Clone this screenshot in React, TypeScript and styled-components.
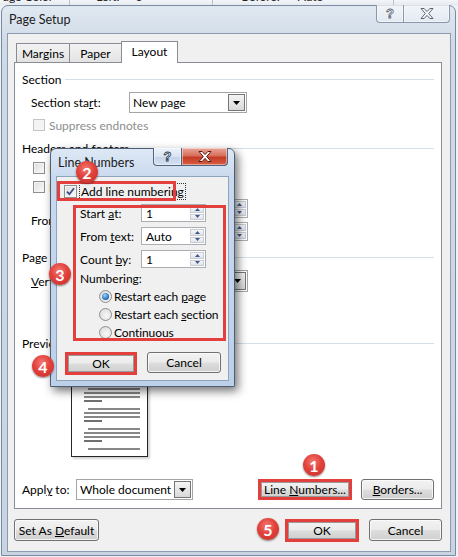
import React from 'react';
import styled, {createGlobalStyle, css} from 'styled-components';

const GlobalStyle = createGlobalStyle`
    html, body {
        margin: 0;
        padding: 0;
    }
    body {
        background: #eef2f6;
        font-family: Lato, "Noto Sans", sans-serif;
        font-size: 12px;
        color: #000;
    }
    * {
        box-sizing: border-box;
    }
`

const RED = '#e3403d';

/* ---------- small drawn bits ---------- */

const DownTriangle = ({color = '#000'}: {color?: string}) => (
    <svg width="7" height="4" viewBox="0 0 7 4"><path d="M0 0H7L3.5 4Z" fill={color}/></svg>
);

const UpTriangle = ({color = '#3f5a8a'}: {color?: string}) => (
    <svg width="5" height="3" viewBox="0 0 5 3"><path d="M0 3H5L2.5 0Z" fill={color}/></svg>
);

const SmallDown = ({color = '#3f5a8a'}: {color?: string}) => (
    <svg width="5" height="3" viewBox="0 0 5 3"><path d="M0 0H5L2.5 3Z" fill={color}/></svg>
);

const CloseGlyph = ({stroke, fill}: { stroke: string, fill: string }) => (
    <svg width="14" height="11" viewBox="0 0 14 11">
        <path d="M1 0.5H4.2L7 3.6L9.8 0.5H13L8.7 5.5L13 10.5H9.8L7 7.4L4.2 10.5H1L5.3 5.5Z"
              fill={fill} stroke={stroke} strokeWidth="1" strokeLinejoin="round"/>
    </svg>
);

const CheckMark = () => (
    <svg width="9" height="9" viewBox="0 0 9 9">
        <path d="M1 4.6L3.4 7.2L8 1.2" fill="none" stroke="#394e8c" strokeWidth="1.8"/>
    </svg>
);

/* ---------- ribbon behind the dialog ---------- */

const Ribbon = styled.div`
    height: 5px;
    overflow: hidden;
    display: flex;
    align-items: flex-start;
    background: linear-gradient(#f3f6f9, #e6ebf1);
    font-size: 12px;
    line-height: 14px;
    color: #222;
`

const RibbonItem = styled.span<{ $gap: number }>`
    margin-left: ${props => props.$gap}px;
    margin-top: -10px;
    white-space: nowrap;
`

const RibbonSep = styled.span<{ $gap: number }>`
    margin-left: ${props => props.$gap}px;
    width: 1px;
    height: 5px;
    background: #b7c1cc;
`

/* ---------- page setup window ---------- */

const Stage = styled.div`
    position: relative;
    width: 458px;
    height: 557px;
    overflow: hidden;
`

const Window = styled.div`
    margin-left: 1px;
    width: 455px;
    height: 551px;
    display: flex;
    flex-direction: column;
    padding: 0 4px 3px 5px;
    border: 1px solid #7a8aa0;
    border-radius: 7px 7px 0 0;
    background: linear-gradient(180deg, #e0e8f1 0px, #cfdae7 40px, #c8d4e2 100%);
`

const TitleBar = styled.div`
    height: 27px;
    display: flex;
    justify-content: space-between;
    align-items: flex-start;
`

const Title = styled.span`
    margin: 6px 0 0 2px;
    font-size: 12.5px;
    line-height: 16px;
    color: #1b1b1b;
`

const CaptionGroup = styled.div<{ $help: number, $close: number }>`
    display: flex;
    margin-top: -1px;
    margin-right: 1px;
    height: 18px;

    & > :first-child {
        width: ${props => props.$help}px;
    }

    & > :last-child {
        width: ${props => props.$close}px;
    }
`

const CaptionButton = styled.span<{ $active?: boolean, $danger?: boolean, $side: 'left' | 'right' }>`
    display: flex;
    align-items: center;
    justify-content: center;
    height: 100%;
    border: 1px solid ${props => props.$active ? '#4f6280' : '#8b98aa'};
    border-top: none;
    ${props => props.$side === 'left' ? css`border-radius: 0 0 0 4px;` : css`border-radius: 0 0 4px 0;
        border-left: none;`}
    background: ${props => props.$danger
            ? 'linear-gradient(180deg, #e9a596 0%, #d7705c 45%, #c43b26 55%, #d65e42 100%)'
            : props.$active
                    ? 'linear-gradient(180deg, #eef3fa 0%, #d9e4f2 50%, #c3d3e8 51%, #d4e1f1 100%)'
                    : 'linear-gradient(180deg, rgba(255,255,255,.55) 0%, rgba(255,255,255,.25) 100%)'};
    box-shadow: inset 0 0 0 1px rgba(255, 255, 255, .45);
`

const HelpGlyph = styled.span<{ $stroke: string }>`
    font-family: "Liberation Sans", sans-serif;
    font-weight: 700;
    font-size: 13px;
    line-height: 13px;
    color: #fff;
    -webkit-text-stroke: 0.8px ${props => props.$stroke};
`

const Client = styled.div`
    flex: 1;
    display: flex;
    flex-direction: column;
    padding: 7px 8px 0 6px;
    border: 1px solid #8c9bb0;
    background: #f0f0f0;
`

const TabStrip = styled.div`
    height: 21px;
    display: flex;
    align-items: flex-end;
    padding-left: 2px;
`

const Tab = styled.span<{ $w: number, $active?: boolean }>`
    width: ${props => props.$w}px;
    height: 19px;
    display: flex;
    align-items: center;
    justify-content: center;
    border: 1px solid #898c95;
    border-bottom: none;
    margin-right: -1px;
    background: linear-gradient(#f3f3f3, #e3e3e3);
    ${props => props.$active && css`
        height: 22px;
        margin-bottom: -1px;
        padding-bottom: 2px;
        background: #fff;
        position: relative;
        z-index: 1;
    `}
`

const Panel = styled.div`
    width: 428px;
    height: 447px;
    display: flex;
    flex-direction: column;
    padding: 0 7px;
    border: 1px solid #898c95;
    background: #fff;
`

const GroupHeading = styled.div<{ $mt: number }>`
    height: 16px;
    margin-top: ${props => props.$mt}px;
    display: flex;
    align-items: center;
    gap: 4px;

    &::after {
        content: '';
        flex: 1;
        height: 1px;
        background: #d5dfe5;
    }
`

const FieldRow = styled.div<{ $mt: number, $h: number, $pl?: number }>`
    height: ${props => props.$h}px;
    margin-top: ${props => props.$mt}px;
    padding-left: ${props => props.$pl ?? 9}px;
    display: flex;
    align-items: center;
`

const FieldLabel = styled.span<{ $w: number, $disabled?: boolean }>`
    width: ${props => props.$w}px;
    flex-shrink: 0;
    white-space: nowrap;
    color: ${props => props.$disabled ? '#8d8d8d' : 'inherit'};
`

const CheckLabel = styled.span<{ $disabled?: boolean }>`
    margin-left: 4px;
    white-space: nowrap;
    color: ${props => props.$disabled ? '#8d8d8d' : 'inherit'};
`

const CheckBox = styled.span<{ $size?: number, $disabled?: boolean }>`
    width: ${props => props.$size ?? 13}px;
    height: ${props => props.$size ?? 13}px;
    flex-shrink: 0;
    display: flex;
    align-items: center;
    justify-content: center;
    border: 1px solid ${props => props.$disabled ? '#c4c4c4' : '#8e8f8f'};
    background: ${props => props.$disabled ? '#f4f4f4' : 'linear-gradient(135deg, #dcdcdc, #fbfbfb)'};
    box-shadow: inset 0 0 0 1px #f4f4f4;
`

const Select = styled.div<{ $w: number }>`
    width: ${props => props.$w}px;
    height: 100%;
    display: flex;
    border: 1px solid #a5a5a5;
    background: #fff;
`

const SelectValue = styled.span`
    flex: 1;
    display: flex;
    align-items: center;
    padding-left: 3px;
    white-space: nowrap;
    overflow: hidden;
`

const SelectArrow = styled.span`
    width: 17px;
    margin: 1px;
    display: flex;
    align-items: center;
    justify-content: center;
    border: 1px solid #767676;
    background: linear-gradient(#f4f4f4, #d9d9d9);
`

const SpinField = styled.div<{ $w: number }>`
    width: ${props => props.$w}px;
    height: 100%;
    display: flex;
    border: 1px solid #abadb3;
    background: #fff;
`

const SpinValue = styled.span`
    flex: 1;
    display: flex;
    align-items: center;
    padding-left: 4px;
`

const SpinButtons = styled.span`
    width: 15px;
    display: flex;
    flex-direction: column;
    padding: 1px 1px 1px 0;
    gap: 1px;
`

const SpinButton = styled.span`
    flex: 1;
    display: flex;
    align-items: center;
    justify-content: center;
    border: 1px solid #c9ccd2;
    background: linear-gradient(#f6f7f9, #dfe3ea);
`

const EdgeBlock = styled.div<{ $mt: number }>`
    margin-top: ${props => props.$mt}px;
    padding-left: 9px;
    display: grid;
    grid-template-columns: 98px 51px 68px;
    grid-template-rows: 19px 19px;
    row-gap: 4px;
    align-items: center;
`

const EdgeLabel = styled.span`
    grid-row: 1 / span 2;
`

const PreviewPage = styled.div`
    margin: 6px 0 0 49px;
    width: 77px;
    height: 100px;
    border: 1px solid #262626;
    background: #fff;
    box-shadow: 2px 2px 2px rgba(0, 0, 0, .18);
`

const ButtonGroup = styled.div<{ $gap: number }>`
    margin-left: auto;
    display: flex;
    align-items: flex-start;
    gap: ${props => props.$gap}px;
`

const Button = styled.button<{ $w: number, $h?: number, $marked?: boolean }>`
    width: ${props => props.$w}px;
    height: ${props => props.$h ?? 22}px;
    padding: 0;
    font-family: inherit;
    font-size: 12px;
    color: #000;
    border: 1px solid #707070;
    border-radius: 3px;
    background: linear-gradient(#f2f2f2 0%, #ebebeb 48%, #dddddd 52%, #cfcfcf 100%);
    box-shadow: inset 0 0 0 1px rgba(252, 252, 252, .8);
    ${props => props.$marked && css`
        border: 3px solid ${RED};
        border-radius: 0;
        box-shadow: inset 0 0 0 1px #9a9a9a;
    `}
`

const BottomRow = styled.div`
    margin-top: 10px;
    display: flex;
    align-items: flex-start;
`

/* ---------- line numbers dialog ---------- */

const LineDialog = styled.div`
    position: absolute;
    left: 50px;
    top: 148px;
    width: 185px;
    height: 239px;
    display: flex;
    flex-direction: column;
    padding: 0 5px 5px 5px;
    border: 1px solid #4d5e75;
    border-radius: 6px 6px 0 0;
    background: linear-gradient(180deg, #dde8f5 0px, #c9d9ee 30px, #bcd0e8 100%);
    box-shadow: 3px 4px 10px rgba(0, 0, 0, .55);
    z-index: 2;
`

const DialogTitleBar = styled.div`
    height: 27px;
    display: flex;
    justify-content: space-between;
    align-items: flex-start;
`

const DialogClient = styled.div`
    flex: 1;
    display: flex;
    flex-direction: column;
    border: 1px solid #8ea3be;
    background: #f0f0f0;
`

const Marked = styled.div<{ $inset: string }>`
    position: relative;

    &::after {
        content: '';
        position: absolute;
        inset: ${props => props.$inset};
        border: 3px solid ${RED};
        pointer-events: none;
    }
`

const AddRow = styled(Marked)`
    width: 119px;
    height: 20px;
    margin-top: 4px;
    padding-left: 7px;
    display: flex;
    align-items: center;
`

const FocusLabel = styled.span`
    margin-left: 2px;
    padding: 0 1px;
    line-height: 15px;
    border: 1px dotted #333;
    white-space: nowrap;
`

const NumberGroup = styled(Marked)`
    width: 153px;
    margin: 3px 0 0 16px;
    display: flex;
    flex-direction: column;
`

const SpinRow = styled.div<{ $mt?: number }>`
    height: 18px;
    margin-top: ${props => props.$mt ?? 0}px;
    padding-left: 7px;
    display: flex;
    align-items: center;
`

const SubLabel = styled.span`
    height: 16px;
    margin-top: 3px;
    padding-left: 7px;
    line-height: 16px;
`

const RadioRow = styled.label`
    height: 18px;
    padding-left: 26px;
    display: flex;
    align-items: center;
    gap: 2px;
    white-space: nowrap;
    letter-spacing: -0.1px;
`

const Radio = styled.span<{ $on?: boolean }>`
    width: 13px;
    height: 13px;
    flex-shrink: 0;
    border-radius: 50%;
    display: flex;
    align-items: center;
    justify-content: center;
    border: 1px solid #8e8f8f;
    background: radial-gradient(circle at 60% 60%, #f8f8f8, #d6d6d6);

    &::after {
        content: '';
        display: ${props => props.$on ? 'block' : 'none'};
        width: 7px;
        height: 7px;
        border-radius: 50%;
        background: radial-gradient(circle at 40% 35%, #9fd6f7 0%, #2a73c2 60%, #1a4f96 100%);
    }
`

const DialogButtons = styled.div`
    margin-top: 11px;
    padding-left: 8px;
    display: flex;
    align-items: flex-start;
    gap: 10px;
`

/* ---------- step badges ---------- */

const Badge = styled.span<{ $x: number, $y: number }>`
    position: absolute;
    left: ${props => props.$x}px;
    top: ${props => props.$y}px;
    width: 22px;
    height: 22px;
    border-radius: 50%;
    display: flex;
    align-items: center;
    justify-content: center;
    background: radial-gradient(circle at 45% 35%, #f37a72 0%, #e2413b 45%, #c22f2a 100%);
    color: #fff;
    font-size: 16px;
    font-weight: 700;
    box-shadow: 0 1px 2px rgba(0, 0, 0, .45);
    z-index: 3;
`

const PageLines = () => {
    const lines: React.ReactNode[] = [];
    for (let p = 0; p < 5; p++) {
        for (let k = 0; k < (p === 4 ? 1 : 4); k++) {
            const y = 10 + p * 20 + k * 4;
            const x1 = k === 0 ? 15 : 11;
            const x2 = k === 3 ? 29 : 67;
            lines.push(<line key={`${p}-${k}`} x1={x1} x2={x2} y1={y} y2={y} stroke="#111" strokeWidth="1.2"/>);
        }
    }
    return <svg width="75" height="98" viewBox="-1 -1 75 98">{lines}</svg>;
};

const DropDown = ({w, value}: { w: number, value: string }) => (
    <Select $w={w}>
        <SelectValue>{value}</SelectValue>
        <SelectArrow><DownTriangle/></SelectArrow>
    </Select>
);

const Spin = ({w, value}: { w: number, value: string }) => (
    <SpinField $w={w}>
        <SpinValue>{value}</SpinValue>
        <SpinButtons>
            <SpinButton><UpTriangle/></SpinButton>
            <SpinButton><SmallDown/></SpinButton>
        </SpinButtons>
    </SpinField>
);

export default function App() {
    return (
        <>
            <GlobalStyle/>
            <Stage>
                <Ribbon>
                    <RibbonItem $gap={-4}>Page Color</RibbonItem>
                    <RibbonSep $gap={16}/>
                    <RibbonItem $gap={26}>Left:</RibbonItem>
                    <RibbonItem $gap={16}>0</RibbonItem>
                    <RibbonSep $gap={70}/>
                    <RibbonItem $gap={28}>Before:</RibbonItem>
                    <RibbonItem $gap={18}>Auto</RibbonItem>
                    <RibbonSep $gap={70}/>
                </Ribbon>
                <Window>
                    <TitleBar>
                        <Title>Page Setup</Title>
                        <CaptionGroup $help={28} $close={46}>
                            <CaptionButton $side="left"><HelpGlyph $stroke="#5d6675">?</HelpGlyph></CaptionButton>
                            <CaptionButton $side="right"><CloseGlyph stroke="#5d6675" fill="#f4f6f9"/></CaptionButton>
                        </CaptionGroup>
                    </TitleBar>
                    <Client>
                        <TabStrip>
                            <Tab $w={54}>Margins</Tab>
                            <Tab $w={53}>Paper</Tab>
                            <Tab $w={57} $active>Layout</Tab>
                        </TabStrip>
                        <Panel>
                            <GroupHeading $mt={8}>Section</GroupHeading>
                            <FieldRow $mt={5} $h={21}>
                                <FieldLabel $w={98}>Section sta<u>r</u>t:</FieldLabel>
                                <DropDown w={118} value="New page"/>
                            </FieldRow>
                            <FieldRow $mt={5} $h={14} $pl={11}>
                                <CheckBox $size={12} $disabled/>
                                <CheckLabel $disabled>Suppress endnotes</CheckLabel>
                            </FieldRow>

                            <GroupHeading $mt={8}>Headers and footers</GroupHeading>
                            <FieldRow $mt={5} $h={14} $pl={11}>
                                <CheckBox $size={12}/>
                                <CheckLabel>Different <u>o</u>dd and even</CheckLabel>
                            </FieldRow>
                            <FieldRow $mt={5} $h={14} $pl={11}>
                                <CheckBox $size={12}/>
                                <CheckLabel>Different first <u>p</u>age</CheckLabel>
                            </FieldRow>
                            <EdgeBlock $mt={5}>
                                <EdgeLabel>From edge:</EdgeLabel>
                                <span>H<u>e</u>ader:</span>
                                <Spin w={68} value={'0.5"'}/>
                                <span>Foote<u>r</u>:</span>
                                <Spin w={68} value={'0.5"'}/>
                            </EdgeBlock>

                            <GroupHeading $mt={8}>Page</GroupHeading>
                            <FieldRow $mt={5} $h={22}>
                                <FieldLabel $w={98}><u>V</u>ertical alignment:</FieldLabel>
                                <DropDown w={119} value="Top"/>
                            </FieldRow>

                            <GroupHeading $mt={43}>Preview</GroupHeading>
                            <PreviewPage><PageLines/></PreviewPage>

                            <FieldRow $mt={22} $h={21} $pl={0}>
                                <FieldLabel $w={54}>Appl<u>y</u> to:</FieldLabel>
                                <DropDown w={117} value="Whole document"/>
                                <ButtonGroup $gap={9}>
                                    <Button $w={94} $h={21} $marked>Line <u>N</u>umbers...</Button>
                                    <Button $w={73} $h={21}><u>B</u>orders...</Button>
                                </ButtonGroup>
                            </FieldRow>
                        </Panel>
                        <BottomRow>
                            <Button $w={85}>Set As <u>D</u>efault</Button>
                            <ButtonGroup $gap={10}>
                                <Button $w={74} $h={23} $marked>OK</Button>
                                <Button $w={73}>Cancel</Button>
                            </ButtonGroup>
                        </BottomRow>
                    </Client>
                </Window>

                <LineDialog>
                    <DialogTitleBar>
                        <Title>Line Numbers</Title>
                        <CaptionGroup $help={29} $close={46}>
                            <CaptionButton $side="left" $active><HelpGlyph $stroke="#27364d">?</HelpGlyph></CaptionButton>
                            <CaptionButton $side="right" $active $danger><CloseGlyph stroke="#5b1a10" fill="#fff"/></CaptionButton>
                        </CaptionGroup>
                    </DialogTitleBar>
                    <DialogClient>
                        <AddRow $inset="0">
                            <CheckBox><CheckMark/></CheckBox>
                            <FocusLabel>Add line numbering</FocusLabel>
                        </AddRow>
                        <NumberGroup $inset="1px 0 0 0">
                            <SpinRow>
                                <FieldLabel $w={61}>Start <u>a</u>t:</FieldLabel>
                                <Spin w={65} value="1"/>
                            </SpinRow>
                            <SpinRow $mt={5}>
                                <FieldLabel $w={61}>From <u>t</u>ext:</FieldLabel>
                                <Spin w={65} value="Auto"/>
                            </SpinRow>
                            <SpinRow $mt={5}>
                                <FieldLabel $w={61}>Count <u>b</u>y:</FieldLabel>
                                <Spin w={65} value="1"/>
                            </SpinRow>
                            <SubLabel>Numbering:</SubLabel>
                            <RadioRow><Radio $on/><span>Restart each <u>p</u>age</span></RadioRow>
                            <RadioRow><Radio/><span>Restart each <u>s</u>ection</span></RadioRow>
                            <RadioRow><Radio/><span><u>C</u>ontinuous</span></RadioRow>
                        </NumberGroup>
                        <DialogButtons>
                            <Button $w={72} $h={23} $marked>OK</Button>
                            <Button $w={74} $h={21}>Cancel</Button>
                        </DialogButtons>
                    </DialogClient>
                </LineDialog>

                <Badge $x={303} $y={454}>1</Badge>
                <Badge $x={76} $y={161}>2</Badge>
                <Badge $x={49} $y={263}>3</Badge>
                <Badge $x={32} $y={355}>4</Badge>
                <Badge $x={257} $y={518}>5</Badge>
            </Stage>
        </>
    );
}
